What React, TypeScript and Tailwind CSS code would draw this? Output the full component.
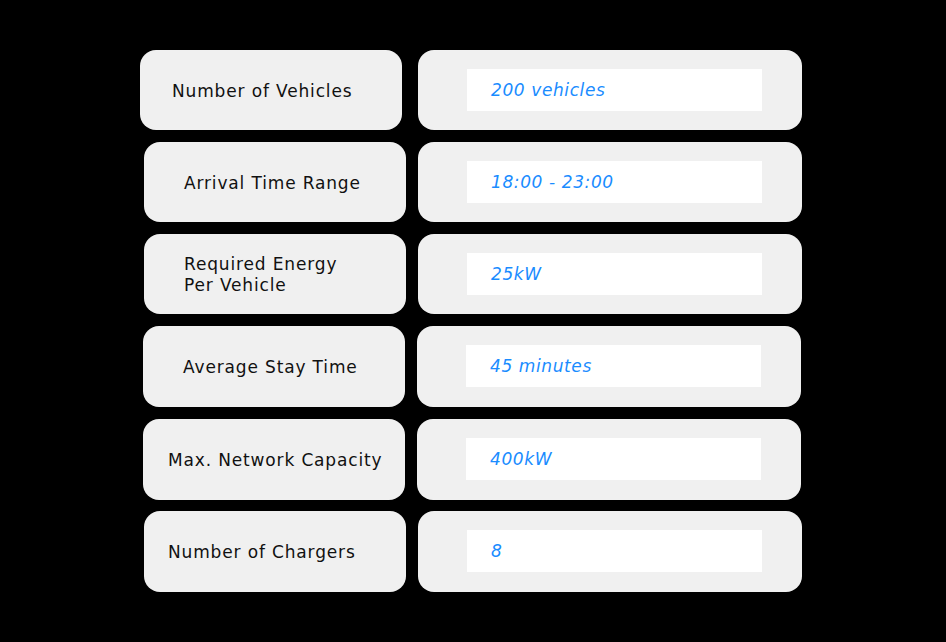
import React from "react";

type Row = {
  label: React.ReactNode;
  value: string;
  lPad: string;
  lx: string;
  rx: string;
  h: string;
  mt: string;
};

const rows: Row[] = [
  { label: "Number of Vehicles", value: "200 vehicles", lPad: "pl-[32px]", lx: "ml-[0px]", rx: "ml-[16px]", h: "h-[80px]", mt: "mt-0" },
  { label: "Arrival Time Range", value: "18:00 - 23:00", lPad: "pl-[40px]", lx: "ml-[4px]", rx: "ml-[12px]", h: "h-[80px]", mt: "mt-[12px]" },
  { label: (<><span>Required Energy</span><span>Per Vehicle</span></>), value: "25kW", lPad: "pl-[40px]", lx: "ml-[4px]", rx: "ml-[12px]", h: "h-[80px]", mt: "mt-[12px]" },
  { label: "Average Stay Time", value: "45 minutes", lPad: "pl-[40px]", lx: "ml-[3px]", rx: "ml-[12px]", h: "h-[81px]", mt: "mt-[12px]" },
  { label: "Max. Network Capacity", value: "400kW", lPad: "pl-[25px]", lx: "ml-[3px]", rx: "ml-[12px]", h: "h-[81px]", mt: "mt-[12px]" },
  { label: "Number of Chargers", value: "8", lPad: "pl-[24px]", lx: "ml-[4px]", rx: "ml-[12px]", h: "h-[81px]", mt: "mt-[11px]" },
];

export default function App() {
  return (
    <div
      className="w-[946px] h-[642px] bg-black pt-[50px] pl-[140px] overflow-hidden"
      style={{ fontFamily: '"DejaVu Sans", "Liberation Sans", sans-serif' }}
    >
      <div className="flex flex-col">
        {rows.map((r, i) => (
          <div key={i} className={`flex ${r.mt} ${r.h}`}>
            <div
              className={`${r.lx} w-[262px] h-full rounded-[16px] bg-[#f0f0f0] flex flex-col justify-center pt-[2px] ${r.lPad} text-[17px] leading-[21px] text-[#111] tracking-[0.85px]`}
            >
              {r.label}
            </div>
            <div className={`${r.rx} w-[384px] h-full rounded-[16px] bg-[#f0f0f0] pl-[49px] pt-[19px]`}>
              <div className="w-[295px] h-[42px] bg-white flex items-center pt-[2px] pl-[24px] text-[17px] italic text-[#1a8cff] tracking-[0.6px]">
                {r.value}
              </div>
            </div>
          </div>
        ))}
      </div>
    </div>
  );
}
